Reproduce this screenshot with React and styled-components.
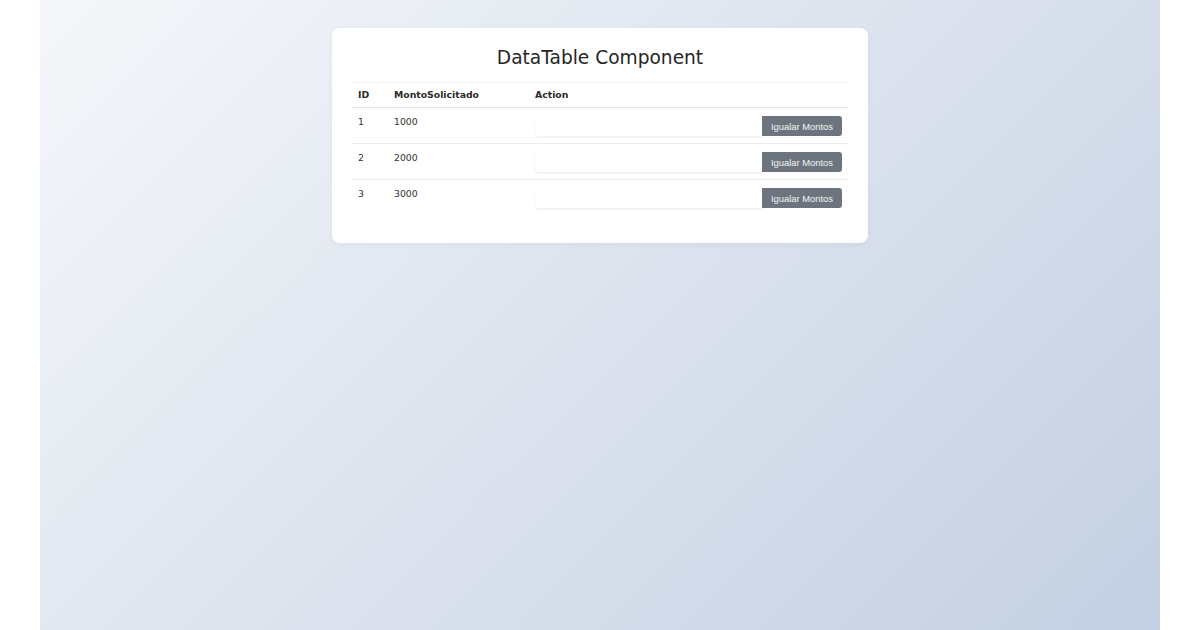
import React from "react";
import styled, { createGlobalStyle } from "styled-components";

const GlobalStyle = createGlobalStyle`
  body {
    margin: 0;
    background: #fff;
    font-family: "DejaVu Sans", sans-serif;
  }
`;

const Page = styled.div`
  max-width: 1120px;
  min-height: 100vh;
  margin: 0 auto;
  padding-top: 28px;
  box-sizing: border-box;
  background: linear-gradient(135deg, #f5f7fa 0%, #c3cfe2 100%);
`;

const Card = styled.div`
  width: 536px;
  margin: 0 auto;
  padding: 19px 20px 28px;
  box-sizing: border-box;
  background: #fff;
  border-radius: 8px;
  box-shadow: 0 2px 6px rgba(0, 0, 0, 0.04);
`;

const Title = styled.h2`
  margin: 0 0 13px;
  font-size: 18.6px;
  font-weight: 400;
  line-height: 22px;
  text-align: center;
  color: #262626;
`;

const Table = styled.table`
  width: 100%;
  border-collapse: collapse;
  font-size: 9.3px;
  color: #333;
`;

const HeadCell = styled.th`
  padding: 6px 6px;
  text-align: left;
  font-weight: 700;
  line-height: 12px;
  color: #2a2a2a;
  border-top: 1px solid #f3f3f3;
  border-bottom: 1px solid #e6e6e6;
`;

const Row = styled.tr`
  border-bottom: ${(p) => (p.$last ? "none" : "1px solid #ececec")};
`;

const Cell = styled.td`
  padding: 8px 6px 7px;
  vertical-align: top;
  line-height: 11px;
`;

const InputGroup = styled.div`
  display: flex;
  height: 20px;
`;

const Input = styled.input`
  flex: 1;
  min-width: 0;
  border: none;
  border-radius: 4px 0 0 4px;
  box-shadow: 0 1px 3px rgba(0, 0, 0, 0.09);
  padding: 0 6px;
  font-size: 9px;
  outline: none;
`;

const Button = styled.button`
  border: none;
  background: #6c757d;
  color: #f4f4f4;
  font-family: "Liberation Sans", Arial, sans-serif;
  font-size: 9.4px;
  padding: 0 9px;
  border-radius: 0 3px 3px 0;
  cursor: pointer;
  white-space: nowrap;
`;

const rows = [
  { id: 1, monto: 1000 },
  { id: 2, monto: 2000 },
  { id: 3, monto: 3000 },
];

export default function App() {
  return (
    <>
      <GlobalStyle />
      <Page>
        <Card>
          <Title>DataTable Component</Title>
          <Table>
            <thead>
              <tr>
                <HeadCell style={{ width: 24 }}>ID</HeadCell>
                <HeadCell style={{ width: 129 }}>MontoSolicitado</HeadCell>
                <HeadCell>Action</HeadCell>
              </tr>
            </thead>
            <tbody>
              {rows.map((r, i) => (
                <Row key={r.id} $last={i === rows.length - 1}>
                  <Cell>{r.id}</Cell>
                  <Cell>{r.monto}</Cell>
                  <Cell>
                    <InputGroup>
                      <Input type="text" />
                      <Button>Igualar Montos</Button>
                    </InputGroup>
                  </Cell>
                </Row>
              ))}
            </tbody>
          </Table>
        </Card>
      </Page>
    </>
  );
}
